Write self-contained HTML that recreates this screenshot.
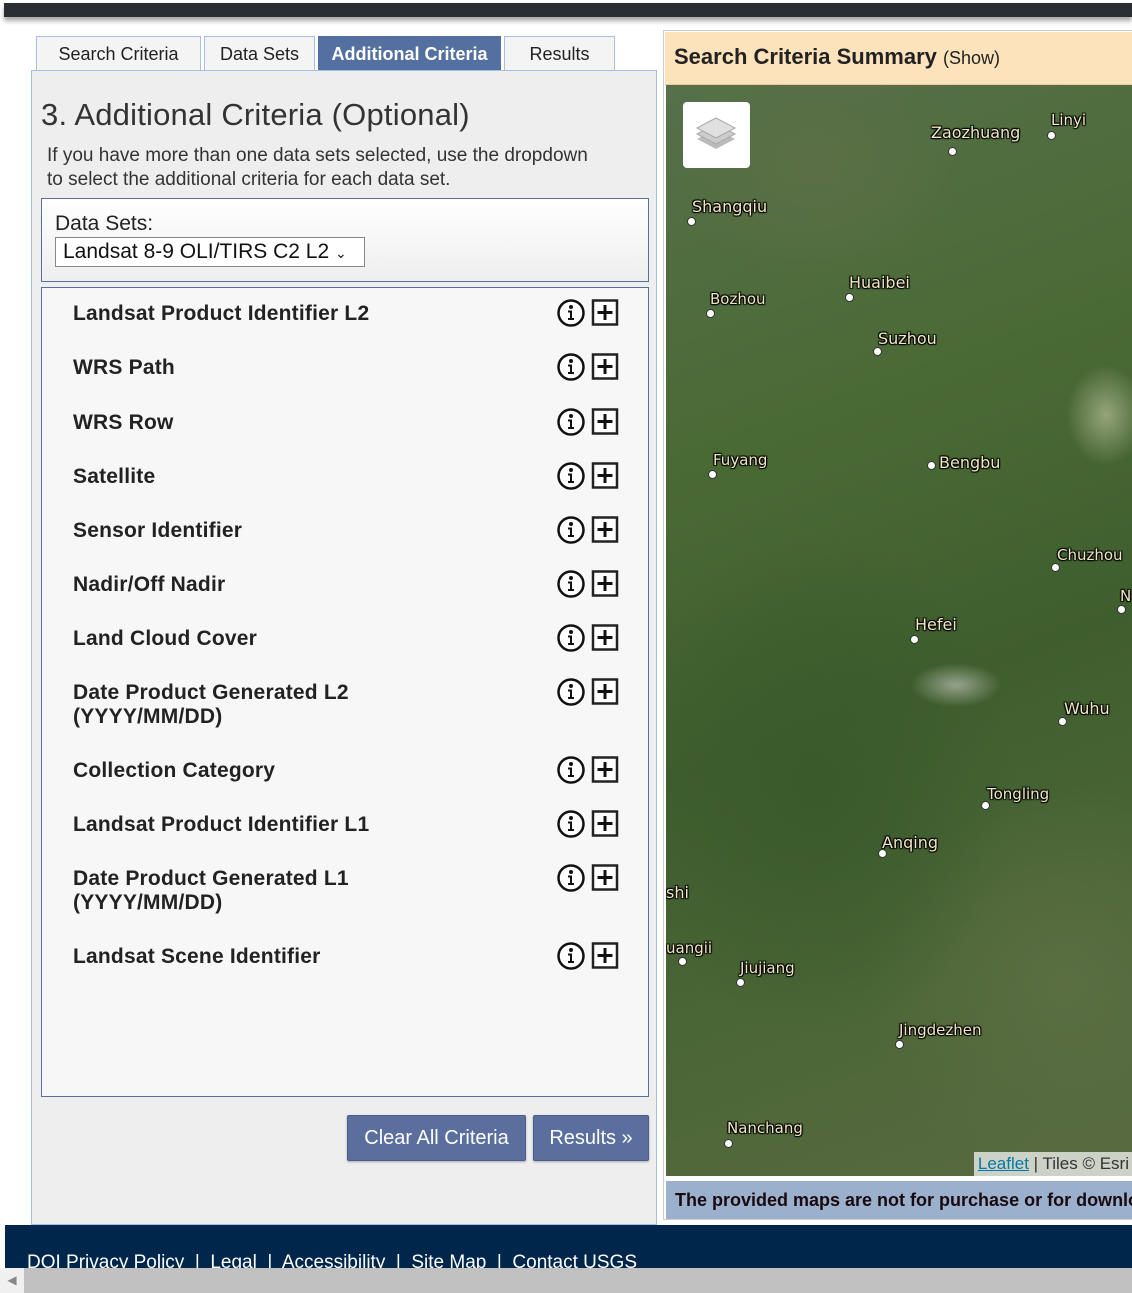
<!DOCTYPE html>
<html><head><meta charset="utf-8"><style>
*{box-sizing:border-box;margin:0;padding:0}
body{width:1132px;height:1293px;overflow:hidden;background:#fff;font-family:"Liberation Sans",Arial,sans-serif;position:relative}
.topbar{position:absolute;left:4px;top:3px;width:1128px;height:14px;background:#2b2e33;box-shadow:0 4px 5px rgba(0,0,0,.35)}
.tab{position:absolute;top:36px;height:35px;border:1px solid #a9bfe0;border-bottom:none;background:#f4f4f4;font-size:18px;color:#222;text-align:center;line-height:34px}
.tab.on{background:#5470a0;color:#fff;font-weight:bold;border-color:#5470a0}
.left{position:absolute;left:31px;top:70px;width:626px;height:1155px;background:#eee;border:1px solid #a9bfe0}
h1{position:absolute;left:9px;top:26px;font-size:31px;font-weight:normal;color:#333;letter-spacing:.2px}
.desc{position:absolute;left:15px;top:73px;font-size:19px;line-height:24px;color:#333;width:572px}
.dsbox{position:absolute;left:9px;top:127px;width:608px;height:84px;border:1px solid #5470a0;background:linear-gradient(#fff,#eee)}
.dsbox .lab{position:absolute;left:13px;top:13px;font-size:21px;color:#222}
.sel{position:absolute;left:13px;top:38px;width:310px;height:30px;border:1px solid #888;background:#fff;font-size:21px;line-height:28px;padding-left:7px;color:#111}
.crit{position:absolute;left:9px;top:216px;width:608px;height:810px;border:1px solid #5470a0;background:#f7f7f7}
.row{position:absolute;left:31px;font-size:21px;font-weight:bold;color:#222;line-height:24px;letter-spacing:.2px}
.btn{position:absolute;top:1044px;height:46px;background:#5a6f9e;color:#fff;font-size:20px;line-height:44px;text-align:center;border:1px solid #4a5f8e;border-radius:2px;box-shadow:0 1px 2px rgba(0,0,0,.3)}
.right{position:absolute;left:663px;top:30px;width:480px;height:1190px;border:1px solid #ccc;background:#fff}
.hdr{position:absolute;left:1px;top:1px;width:480px;height:53px;background:#fde3bc;border-bottom:1px solid #f0c890;font-size:22px;font-weight:bold;color:#222;padding:12px 9px}
.hdr span{font-weight:normal;font-size:18px}
.map{position:absolute;left:2px;top:54px;width:480px;height:1091px;overflow:hidden;background:
radial-gradient(ellipse 40px 50px at 440px 330px,rgba(170,180,140,.8),transparent),
radial-gradient(ellipse 45px 22px at 290px 600px,rgba(160,170,150,.9),transparent),
radial-gradient(ellipse 150px 120px at 150px 80px,#5b6f45,transparent),
radial-gradient(ellipse 200px 250px at 150px 700px,#3a5a2c,transparent),
radial-gradient(ellipse 200px 200px at 400px 900px,#5a6e42,transparent),
linear-gradient(160deg,#56704a 0%,#4a6a35 30%,#3f5e2e 55%,#4d6738 80%,#5a6a42 100%)}
.lbl{position:absolute;font-family:"DejaVu Sans",sans-serif;font-size:16px;color:#f2e6c4;text-shadow:1px 1px 1px #000,-1px -1px 1px #000,1px -1px 1px #000,-1px 1px 1px #000}
.dot{position:absolute;width:9px;height:9px;border-radius:50%;background:#fff;border:1.5px solid #333}
.layers{position:absolute;left:17px;top:17px;width:67px;height:66px;background:#fff;border-radius:4px}
.attr{position:absolute;right:13px;bottom:0;background:rgba(255,255,255,.7);font-size:17px;color:#333;padding:2px 4px}
.note{position:absolute;left:2px;top:1150px;width:480px;height:38px;background:#9ab0cc;font-size:18px;font-weight:bold;color:#1a0a10;padding:9px 9px;white-space:nowrap}
.foot{position:absolute;left:5px;top:1225px;width:1127px;height:44px;background:#00264c;color:#fff;font-size:19px;padding:27px 0 0 22px;overflow:hidden;white-space:nowrap}
.scroll{position:absolute;left:0;top:1268px;width:1132px;height:25px;background:#c1c1c1}
.scroll .tr{position:absolute;left:0;top:0;width:24px;height:25px;background:#f0f0f0;color:#888;font-size:12px;text-align:center;line-height:25px}
</style></head><body>
<div class="topbar"></div>
<div class="tab" style="left:36px;width:165px">Search Criteria</div>
<div class="tab" style="left:204px;width:111px">Data Sets</div>
<div class="tab on" style="left:318px;width:183px">Additional Criteria</div>
<div class="tab" style="left:504px;width:111px">Results</div>
<div class="left">
<h1>3. Additional Criteria (Optional)</h1>
<div class="desc">If you have more than one data sets selected, use the dropdown<br>to select the additional criteria for each data set.</div>
<div class="dsbox"><div class="lab">Data Sets:</div><div class="sel">Landsat 8-9 OLI/TIRS C2 L2 <span style="font-size:14px">&#8964;</span></div></div>
<div class="crit">
<div class="row" style="top:14px">Landsat Product Identifier L2</div>
<div class="row" style="top:68px">WRS Path</div>
<div class="row" style="top:123px">WRS Row</div>
<div class="row" style="top:177px">Satellite</div>
<div class="row" style="top:231px">Sensor Identifier</div>
<div class="row" style="top:285px">Nadir/Off Nadir</div>
<div class="row" style="top:339px">Land Cloud Cover</div>
<div class="row" style="top:393px">Date Product Generated L2<br>(YYYY/MM/DD)</div>
<div class="row" style="top:471px">Collection Category</div>
<div class="row" style="top:525px">Landsat Product Identifier L1</div>
<div class="row" style="top:579px">Date Product Generated L1<br>(YYYY/MM/DD)</div>
<div class="row" style="top:657px">Landsat Scene Identifier</div>
</div>
<div class="btn" style="left:315px;width:179px">Clear All Criteria</div>
<div class="btn" style="left:501px;width:116px">Results »</div>
</div>
<svg style="position:absolute;left:0;top:0" width="660" height="1000">
<defs><g id="i"><circle cx="14" cy="14" r="12.5" fill="#fff" stroke="#111" stroke-width="2.5"/><circle cx="14" cy="8" r="2" fill="#111"/><path d="M11 11.5h4v7.5h2v2h-6v-2h2v-5.5h-2z" fill="#111"/><rect x="36" y="1.5" width="24" height="24" fill="#fff" stroke="#222" stroke-width="2.5"/><path d="M48 6v15M40.5 13.5h15" stroke="#111" stroke-width="3"/></g></defs>
<use href="#i" x="557" y="299"/><use href="#i" x="557" y="353"/><use href="#i" x="557" y="408"/><use href="#i" x="557" y="462"/><use href="#i" x="557" y="516"/><use href="#i" x="557" y="570"/><use href="#i" x="557" y="624"/><use href="#i" x="557" y="678"/><use href="#i" x="557" y="756"/><use href="#i" x="557" y="810"/><use href="#i" x="557" y="864"/><use href="#i" x="557" y="942"/>
</svg>
<div class="right">
<div class="hdr">Search Criteria Summary <span>(Show)</span></div>
<div class="map">
<div class="layers"><svg width="67" height="66"><path d="M14 37l19-10 19 10-19 10z" fill="#bbb"/><path d="M14 32l19-10 19 10-19 10z" fill="#ccc" stroke="#aaa"/><path d="M14 26l19-10 19 10-19 10z" fill="#e0e0e0" stroke="#aaa"/></svg></div>
<div class="lbl" style="left:265px;top:38px">Zaozhuang</div><div class="dot" style="left:282px;top:62px"></div>
<div class="lbl" style="left:385px;top:26px;font-size:15px">Linyi</div><div class="dot" style="left:381px;top:46px"></div>
<div class="lbl" style="left:26px;top:112px">Shangqiu</div><div class="dot" style="left:21px;top:132px"></div>
<div class="lbl" style="left:183px;top:188px">Huaibei</div><div class="dot" style="left:179px;top:208px"></div>
<div class="lbl" style="left:44px;top:205px;font-size:15px">Bozhou</div><div class="dot" style="left:40px;top:224px"></div>
<div class="lbl" style="left:212px;top:244px">Suzhou</div><div class="dot" style="left:207px;top:262px"></div>
<div class="lbl" style="left:47px;top:366px;font-size:15px">Fuyang</div><div class="dot" style="left:42px;top:385px"></div>
<div class="lbl" style="left:273px;top:368px">Bengbu</div><div class="dot" style="left:261px;top:376px"></div>
<div class="lbl" style="left:391px;top:461px;font-size:15px">Chuzhou</div><div class="dot" style="left:385px;top:478px"></div>
<div class="lbl" style="left:454px;top:502px;font-size:15px">N</div><div class="dot" style="left:451px;top:520px"></div>
<div class="lbl" style="left:249px;top:530px">Hefei</div><div class="dot" style="left:244px;top:550px"></div>
<div class="lbl" style="left:398px;top:614px">Wuhu</div><div class="dot" style="left:392px;top:632px"></div>
<div class="lbl" style="left:321px;top:700px;font-size:15px">Tongling</div><div class="dot" style="left:315px;top:716px"></div>
<div class="lbl" style="left:216px;top:748px">Anqing</div><div class="dot" style="left:212px;top:764px"></div>
<div class="lbl" style="left:0px;top:798px">shi</div>
<div class="lbl" style="left:0px;top:854px;font-size:15px">uangii</div><div class="dot" style="left:12px;top:872px"></div>
<div class="lbl" style="left:74px;top:874px;font-size:15px">Jiujiang</div><div class="dot" style="left:70px;top:893px"></div>
<div class="lbl" style="left:233px;top:936px;font-size:15px">Jingdezhen</div><div class="dot" style="left:229px;top:955px"></div>
<div class="lbl" style="left:61px;top:1034px;font-size:15px">Nanchang</div><div class="dot" style="left:58px;top:1054px"></div>
<div class="attr"><span style="color:#0078a8;text-decoration:underline">Leaflet</span> | Tiles © Esri</div>
</div>
<div class="note">The provided maps are not for purchase or for download</div>
</div>
<div class="foot">DOI Privacy Policy &nbsp;|&nbsp; Legal &nbsp;|&nbsp; Accessibility &nbsp;|&nbsp; Site Map &nbsp;|&nbsp; Contact USGS</div>
<div class="scroll"><div class="tr">◀</div></div>
</body></html>
